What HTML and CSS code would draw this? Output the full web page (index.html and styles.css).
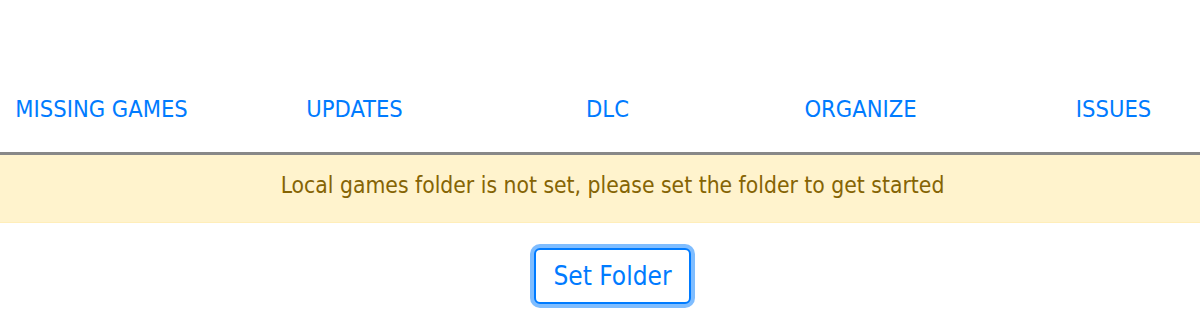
FILE: index.html
```html
<!DOCTYPE html>
<html>
<head>
<meta charset="utf-8">
<link rel="stylesheet" href="styles.css">
</head>
<body>
<nav class="tabs">
  <a class="tab">MISSING GAMES</a>
  <a class="tab">UPDATES</a>
  <a class="tab">DLC</a>
  <a class="tab">ORGANIZE</a>
  <a class="tab">ISSUES</a>
</nav>
<div class="alert">Local games folder is not set, please set the folder to get started</div>
<div class="actions">
  <button class="btn">Set Folder</button>
</div>
</body>
</html>
```
FILE: styles.css
```css
body {
  margin: 0;
  background: #fff;
  font-family: "DejaVu Sans Condensed", "DejaVu Sans", sans-serif;
}
.tabs {
  display: grid;
  grid-template-columns: repeat(5, 253px);
  margin-left: -25px;
  padding: 93px 0 26px;
  line-height: 33px;
  border-bottom: 3px solid #888;
}
.tab {
  text-align: center;
  color: #007bff;
  font-size: 23.5px;
  text-decoration: none;
}
.alert {
  background: #fff3cd;
  color: #856404;
  border-bottom: 1px solid #ffeeba;
  text-align: center;
  font-size: 22.7px;
  line-height: 28px;
  padding: 16px 0 23px 25px;
}
.actions {
  display: flex;
  justify-content: center;
  padding: 25px 0 20px 25px;
}
.btn {
  font-family: inherit;
  font-size: 26px;
  line-height: 30px;
  color: #007bff;
  background: #fff;
  border: 2px solid #007bff;
  border-radius: 6px;
  height: 56px;
  box-sizing: border-box;
  padding: 0 17px;
  box-shadow: 0 0 0 4px rgba(0, 123, 255, 0.5);
}
```
